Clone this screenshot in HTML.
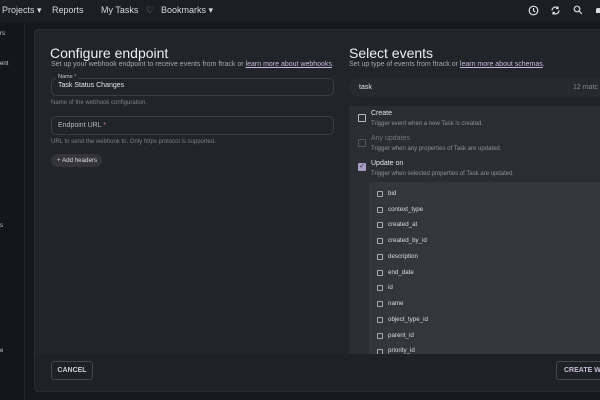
<!DOCTYPE html>
<html><head><meta charset="utf-8"><style>
*{box-sizing:border-box;margin:0;padding:0}
body{width:600px;height:400px;overflow:hidden;background:#16191c;font-family:"Liberation Sans",sans-serif;color:#e6e6e6;position:relative}
.top{position:absolute;left:0;top:0;width:600px;height:22px;background:#1c1f22}
.top span{position:absolute;top:5px;font-size:9px;color:#d8d8d8}
.side{position:absolute;left:0;top:22px;width:25px;height:378px;background:#14171a;border-right:1px solid #1f2226}
.side span{position:absolute;left:0;font-size:6px;color:#ccc}
.modal{position:absolute;left:34px;top:29px;width:580px;height:363px;background:#212428;border:1px solid #2a2d31;border-radius:4px;overflow:hidden}
.a{position:absolute;white-space:nowrap}
h2{position:absolute;font-weight:normal;font-size:14px;color:#eee}
.sub{position:absolute;font-size:7px;color:#a5a8ad;white-space:nowrap}
.sub u{color:#c9b6e0}
.inp{position:absolute;border:1px solid #3b3e43;border-radius:5px;background:#212428}
.help{position:absolute;font-size:6px;color:#7d8085;white-space:nowrap}
.cb{position:absolute;width:7px;height:7px;border:1px solid #bbb;border-radius:1px}
.cb.s{width:6px;height:6px;border-color:#aaa}
.item{position:absolute;font-size:6.2px;color:#ddd}
</style></head><body>
<div class="top">
<span style="left:2px">Projects ▾</span><span style="left:52px">Reports</span><span style="left:101px">My Tasks</span>
<span style="left:146px;color:#aaa">♡</span><span style="left:161px">Bookmarks ▾</span>
<svg class="a" style="left:528px;top:5px" width="11" height="11" viewBox="0 0 11 11" fill="none" stroke="#ddd" stroke-width="1.2"><circle cx="5.5" cy="5.5" r="4.3"/><path d="M5.5 3v2.7l1.6 1.2"/></svg>
<svg class="a" style="left:550px;top:5px" width="11" height="11" viewBox="0 0 11 11" fill="none" stroke="#ddd" stroke-width="1.2"><path d="M2 5.5a3.5 3.5 0 0 1 6-2.4M9 5.5a3.5 3.5 0 0 1-6 2.4"/><path d="M8 1.5v2h-2M3 9.5v-2h2"/></svg>
<svg class="a" style="left:573px;top:5px" width="10" height="10" viewBox="0 0 10 10" fill="none" stroke="#ddd" stroke-width="1.2"><circle cx="4" cy="4" r="2.8"/><path d="M6 6l2.8 2.8"/></svg>
<div class="a" style="left:596px;top:8px;width:5px;height:5px;background:#ddd;border-radius:2px 2px 0 0"></div>
</div>
<div class="side"><span style="top:9px">rs</span><span style="top:39px">ent</span><span style="top:201px">s</span><span style="top:326px">e</span></div>
<div class="modal">
<h2 style="left:15px;top:15px">Configure endpoint</h2>
<div class="sub" style="left:16px;top:31px">Set up your webhook endpoint to receive events from ftrack or <u>learn more about webhooks</u>.</div>
<div class="inp" style="left:16px;top:48px;width:283px;height:18px"></div>
<div class="a" style="left:21px;top:44px;font-size:5.5px;color:#ccc;background:#212428;padding:0 2px">Name <span style="color:#c88">*</span></div>
<div class="a" style="left:23px;top:52px;font-size:7px">Task Status Changes</div>
<div class="help" style="left:16px;top:70px">Name of the webhook configuration.</div>
<div class="inp" style="left:16px;top:86px;width:283px;height:19px"></div>
<div class="a" style="left:23px;top:92px;font-size:7px;color:#bbb">Endpoint URL <span style="color:#c88">*</span></div>
<div class="help" style="left:16px;top:109px">URL to send the webhook to. Only https protocol is supported.</div>
<div class="a" style="left:16px;top:124px;width:51px;height:13px;background:#35343c;border-radius:7px;font-size:6.2px;color:#ddd;padding:3px 0 0 6px">+ Add headers</div>

<h2 style="left:314px;top:15px">Select events</h2>
<div class="sub" style="left:314px;top:31px">Set up type of events from ftrack or <u>learn more about schemas</u>.</div>
<div class="a" style="left:314px;top:48px;width:280px;height:19px;background:#26292d;border-radius:9px"></div>
<div class="a" style="left:324px;top:54px;font-size:7px">task</div>
<div class="a" style="left:538px;top:54px;font-size:7px;color:#888">12 matc</div>
<div class="a" style="left:314px;top:76px;width:270px;height:248px;background:#2a2d31"></div>
<div class="cb" style="left:323px;top:84px;width:8px;height:8px"></div>
<div class="a" style="left:336px;top:80px;font-size:7px">Create</div>
<div class="help" style="left:336px;top:91px;color:#8f9297">Trigger event when a new Task is created.</div>
<div class="cb" style="left:323px;top:109px;width:8px;height:8px;border-color:#555"></div>
<div class="a" style="left:336px;top:105px;font-size:7px;color:#777">Any updates</div>
<div class="help" style="left:336px;top:116px;color:#8f9297">Trigger when any properties of Task are updated.</div>
<div class="a" style="left:323px;top:133px;width:8px;height:8px;background:#a99bc4;border-radius:1px;font-size:7px;color:#333;line-height:8px;text-align:center">✓</div>
<div class="a" style="left:336px;top:130px;font-size:7px">Update on</div>
<div class="help" style="left:336px;top:141px;color:#8f9297">Trigger when selected properties of Task are updated.</div>
<div class="a" style="left:334px;top:152px;width:250px;height:172px;background:#33363a;border-radius:2px"></div>
<div class="cb s" style="left:342px;top:161px"></div><div class="item" style="left:353px;top:160px">bid</div>
<div class="cb s" style="left:342px;top:177px"></div><div class="item" style="left:353px;top:176px">context_type</div>
<div class="cb s" style="left:342px;top:192px"></div><div class="item" style="left:353px;top:191px">created_at</div>
<div class="cb s" style="left:342px;top:208px"></div><div class="item" style="left:353px;top:207px">created_by_id</div>
<div class="cb s" style="left:342px;top:224px"></div><div class="item" style="left:353px;top:223px">description</div>
<div class="cb s" style="left:342px;top:240px"></div><div class="item" style="left:353px;top:239px">end_date</div>
<div class="cb s" style="left:342px;top:255px"></div><div class="item" style="left:353px;top:254px">id</div>
<div class="cb s" style="left:342px;top:271px"></div><div class="item" style="left:353px;top:270px">name</div>
<div class="cb s" style="left:342px;top:287px"></div><div class="item" style="left:353px;top:286px">object_type_id</div>
<div class="cb s" style="left:342px;top:303px"></div><div class="item" style="left:353px;top:302px">parent_id</div>
<div class="cb s" style="left:342px;top:319px"></div><div class="item" style="left:353px;top:317px">priority_id</div>
<div class="a" style="left:0;top:324px;width:580px;height:39px;background:#1e2125"></div>
<div class="a" style="left:16px;top:331px;width:42px;height:19px;border:1px solid #44474c;border-radius:3px;font-size:7px;font-weight:bold;color:#ccc;text-align:center;line-height:17px">CANCEL</div>
<div class="a" style="left:521px;top:331px;width:80px;height:19px;border:1px solid #44474c;border-radius:3px;font-size:7px;font-weight:bold;color:#c8bcd8;line-height:17px;padding-left:7px">CREATE WEBHOOK</div>
</div>
</body></html>
